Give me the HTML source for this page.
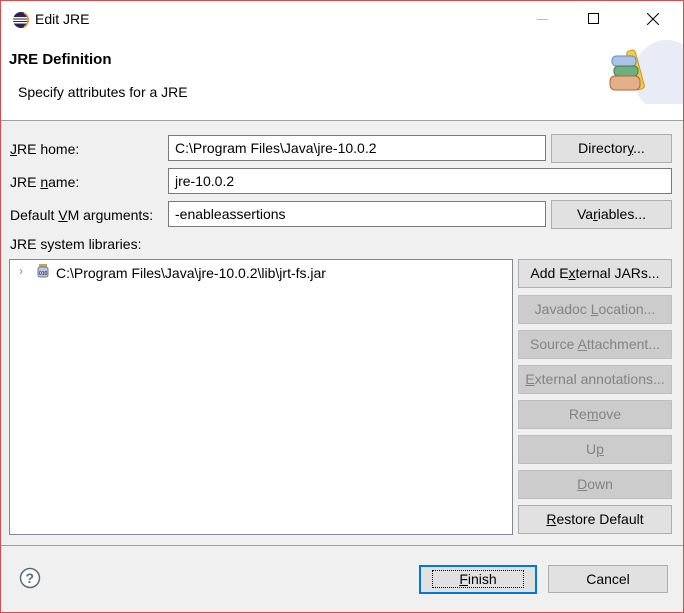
<!DOCTYPE html>
<html><head><style>
*{box-sizing:border-box;margin:0;padding:0}
body{width:684px;height:613px;overflow:hidden;font-family:"Liberation Sans",sans-serif;font-size:14px;color:#000;background:#f0f0f0}
.win{position:absolute;left:0;top:0;width:684px;height:613px;background:#f0f0f0}
.a{position:absolute}
.hdr{left:0;top:0;width:684px;height:121px;background:#fff;border-bottom:1px solid #a0a0a0}
.inp{background:#fff;border:1px solid #7a7a7a;height:26px;padding:4px 6px;white-space:nowrap}
.btn{background:#e1e1e1;border:1px solid #adadad;text-align:center;line-height:27px;height:29px;white-space:nowrap}
.dis{color:#838383;border-color:#bfbfbf;background:#ccc}
u{text-decoration:underline}
</style></head><body><div class="win">
<div class="a hdr"></div>
<svg class="a" style="left:12px;top:11px" width="18" height="18" viewBox="0 0 18 18"><circle cx="9" cy="9" r="8" fill="#2c2255"/><rect x="1" y="6" width="16" height="1.5" fill="#fff"/><rect x="1" y="8.5" width="16" height="1.5" fill="#fff"/><rect x="1" y="11" width="16" height="1.5" fill="#fff"/><path d="M12 2a8 8 0 0 1 0 14" stroke="#f7941e" stroke-width="1.5" fill="none"/></svg>
<div class="a" style="left:35px;top:11px;font-size:14px">Edit JRE</div>
<div class="a" style="left:537px;top:19px;width:11px;height:1px;background:#bbb"></div>
<div class="a" style="left:588px;top:13px;width:11px;height:11px;border:1px solid #000"></div>
<svg class="a" style="left:647px;top:13px" width="12" height="12"><path d="M0 0L12 12M12 0L0 12" stroke="#000" stroke-width="1"/></svg>
<div class="a" style="left:9px;top:51px;font-weight:bold;font-size:15px">JRE Definition</div>
<div class="a" style="left:18px;top:84px">Specify attributes for a JRE</div>
<svg class="a" style="left:605px;top:40px" width="78" height="64"><ellipse cx="62" cy="36" rx="34" ry="36" fill="#e8ecf6"/><rect x="26" y="10" width="9" height="40" rx="3" fill="#f2c94c" stroke="#c9962a" transform="rotate(-15 30 30)"/><rect x="7" y="16" width="24" height="10" rx="4" fill="#a8c4e8" stroke="#6a8ab8"/><rect x="9" y="26" width="24" height="10" rx="4" fill="#6fae7e" stroke="#3f7a4e"/><rect x="5" y="36" width="30" height="14" rx="5" fill="#e3b08a" stroke="#a86a3e"/></svg>
<div class="a" style="left:10px;top:141px"><u>J</u>RE home:</div>
<div class="a inp" style="left:168px;top:135px;width:378px">C:\Program Files\Java\jre-10.0.2</div>
<div class="a btn" style="left:551px;top:134px;width:121px">Director<u>y</u>...</div>
<div class="a" style="left:10px;top:174px">JRE <u>n</u>ame:</div>
<div class="a inp" style="left:168px;top:168px;width:504px">jre-10.0.2</div>
<div class="a" style="left:10px;top:207px">Default <u>V</u>M arguments:</div>
<div class="a inp" style="left:168px;top:201px;width:378px">-enableassertions</div>
<div class="a btn" style="left:551px;top:200px;width:121px">Va<u>r</u>iables...</div>
<div class="a" style="left:10px;top:236px">JRE system libraries:</div>
<div class="a" style="left:9px;top:259px;width:504px;height:276px;background:#fff;border:1px solid #828790"></div>
<div class="a" style="left:19px;top:264px;color:#888;font-size:12px">&#8250;</div>
<svg class="a" style="left:37px;top:264px" width="12" height="14"><rect x="2" y="0" width="8" height="3" fill="#c8a060"/><rect x="1" y="3" width="10" height="10" rx="2" fill="#b8c8e0" stroke="#6a7a9a"/><text x="2" y="11" font-size="5" font-family="Liberation Sans">010</text></svg>
<div class="a" style="left:56px;top:265px">C:\Program Files\Java\jre-10.0.2\lib\jrt-fs.jar</div>
<div class="a btn" style="left:518px;top:259px;width:154px">Add E<u>x</u>ternal JARs...</div>
<div class="a btn dis" style="left:518px;top:295px;width:154px">Javadoc <u>L</u>ocation...</div>
<div class="a btn dis" style="left:518px;top:330px;width:154px">Source <u>A</u>ttachment...</div>
<div class="a btn dis" style="left:518px;top:365px;width:154px"><u>E</u>xternal annotations...</div>
<div class="a btn dis" style="left:518px;top:400px;width:154px">Re<u>m</u>ove</div>
<div class="a btn dis" style="left:518px;top:435px;width:154px">U<u>p</u></div>
<div class="a btn dis" style="left:518px;top:470px;width:154px"><u>D</u>own</div>
<div class="a btn" style="left:518px;top:505px;width:154px"><u>R</u>estore Default</div>
<div class="a" style="left:0;top:545px;width:684px;height:1px;background:#a0a0a0"></div>
<svg class="a" style="left:19px;top:567px" width="22" height="22"><circle cx="11" cy="11" r="9.5" fill="#fff" stroke="#5a6a84" stroke-width="1.5"/><text x="6.5" y="16" font-size="14" font-weight="bold" fill="#5a6a84" font-family="Liberation Sans">?</text></svg>
<div class="a btn" style="left:419px;top:565px;width:118px;border:2px solid #0078d7;line-height:25px"><span style="outline:1px dotted #000;padding:0 26px"><u>F</u>inish</span></div>
<div class="a btn" style="left:548px;top:565px;width:120px;height:28px;line-height:26px">Cancel</div>
<div class="a" style="left:0;top:0;width:684px;height:613px;border:1px solid #d34f4f"></div>
</div></body></html>
